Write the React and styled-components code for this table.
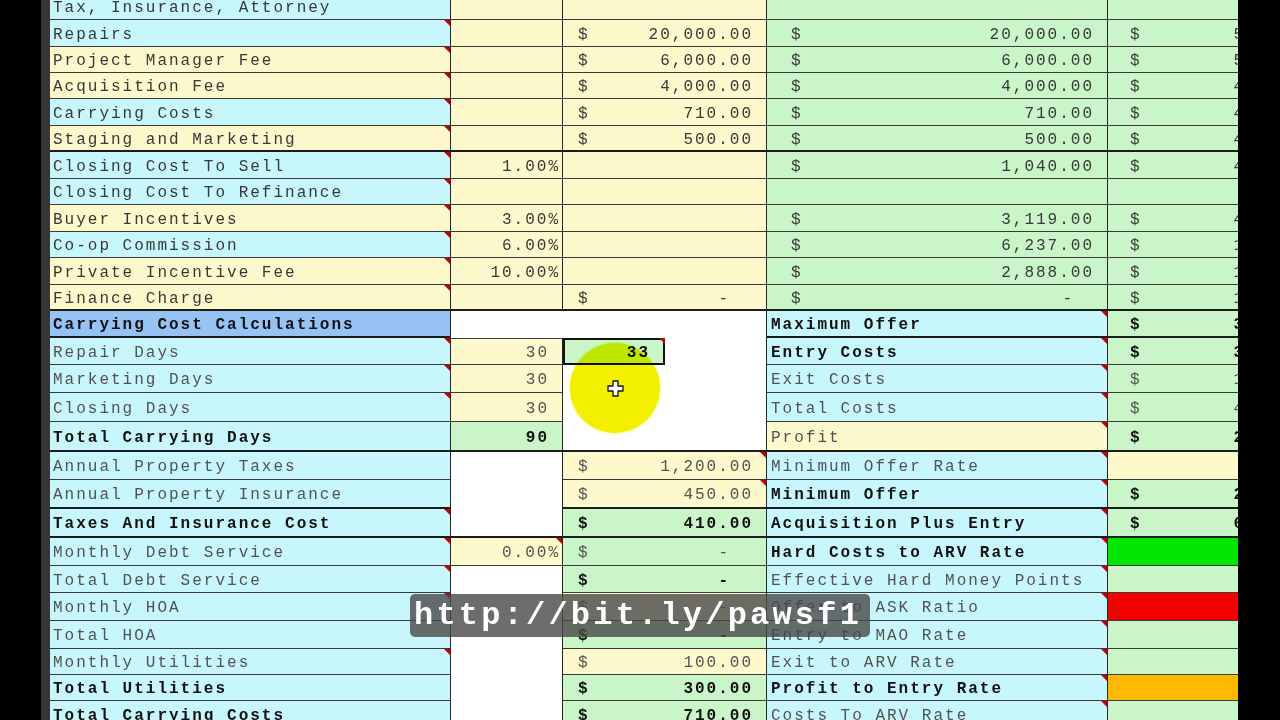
import React from 'react';
import styled, { createGlobalStyle } from 'styled-components';

const GlobalStyle = createGlobalStyle`
  html, body { margin: 0; padding: 0; background: #000; }
  body { width: 1280px; height: 720px; overflow: hidden; font-family: "Liberation Mono", "Courier New", monospace; }
`;

const COL = {
  cyan: '#c7f7fc',
  yel: '#fdf9cd',
  grn: '#c9f5c9',
  blue: '#97c2f4',
  white: '#ffffff',
  lime: '#00e600',
  red: '#f40000',
  orange: '#fdb800',
};

const Screen = styled.div`
  position: relative;
  display: flex;
  width: 1280px;
  height: 720px;
  overflow: hidden;
  background: #000;
`;

const Gutter = styled.div`
  width: 41px;
  flex: none;
  background: #000;
`;

const RowHeaders = styled.div`
  width: 9px;
  flex: none;
  background: #363636;
`;

const Viewport = styled.div`
  width: 1188px;
  flex: none;
  overflow: hidden;
`;

const RightEdge = styled.div`
  flex: 1;
  background: #000;
`;

const Sheet = styled.div`
  margin-top: -6px;
  width: 1300px;
`;

const SheetRow = styled.div`
  display: grid;
  grid-template-columns: 401px 112px 102px 102px 341px 242px;
  height: ${(p) => p.$h}px;
`;

const lineFor = (l) =>
  l === 'none' ? '0' : l === 'heavy' ? '2px solid #1c1c1c' : '1px solid #3a3a3a';

const Cell = styled.div`
  position: relative;
  grid-column: span ${(p) => p.$span || 1};
  box-sizing: border-box;
  min-width: 0;
  display: flex;
  align-items: center;
  justify-content: ${(p) => p.$justify || 'flex-start'};
  padding: 3px ${(p) => p.$pr ?? 0}px 0 ${(p) => p.$pl ?? 0}px;
  background: ${(p) => p.$bg};
  border-right: ${(p) => (p.$noRight ? '0' : '1px solid #262626')};
  border-bottom: ${(p) => lineFor(p.$line)};
  box-shadow: ${(p) =>
    p.$selected ? 'inset 0 0 0 2px #111' : p.$topLine ? 'inset 0 1px 0 #3a3a3a' : 'none'};
  color: ${(p) => (p.$bold ? '#111' : p.$muted ? '#525252' : '#383838')};
  font-weight: ${(p) => (p.$bold ? 700 : 400)};
  font-size: 16px;
  letter-spacing: 2px;
  white-space: nowrap;
  overflow: hidden;

  &::after {
    content: '';
    display: ${(p) => (p.$note ? 'block' : 'none')};
    position: absolute;
    top: 0;
    right: 0;
    width: 0;
    height: 0;
    border-top: 6px solid #c40000;
    border-left: 6px solid transparent;
  }
`;

const Sign = styled.span`
  flex: none;
`;

const Amount = styled.span`
  flex: none;
`;

const Highlight = styled.div`
  position: absolute;
  left: 570px;
  top: 343px;
  width: 90px;
  height: 90px;
  border-radius: 50%;
  background: #f2f000;
  mix-blend-mode: multiply;
  box-shadow: 0 0 3px rgba(242, 240, 0, 0.7);
`;

const CursorSpot = styled.div`
  position: absolute;
  left: 607px;
  top: 380px;
  width: 17px;
  height: 17px;
  display: flex;
`;

const UrlBadge = styled.div`
  position: absolute;
  left: 410px;
  top: 594px;
  width: 460px;
  height: 43px;
  box-sizing: border-box;
  padding-left: 4px;
  border-radius: 5px;
  background: rgba(72, 72, 72, 0.8);
  color: #fff;
  font-family: "Liberation Mono", "Courier New", monospace;
  font-weight: 700;
  font-size: 32px;
  letter-spacing: 3.2px;
  line-height: 43px;
  white-space: nowrap;
`;

const PAD = {
  cd: { span: 2, pl: 15, pr: 13 },
  e: { pl: 24, pr: 13 },
  f: { pl: 22, pr: 11 },
};

const L = (text, bg, o = {}) => ({ kind: 'label', text, bg, pl: 3, ...o });
const EL = (text, bg, o = {}) => ({ kind: 'label', text, bg, pl: 4, note: true, ...o });
const M = (amount, bg, col, o = {}) => ({ kind: 'money', amount, bg, ...PAD[col], ...(amount === '-' ? { pr: col === 'e' ? 33 : 36 } : {}), ...o });
const N = (text, bg, o = {}) => ({ kind: 'num', text, bg, justify: 'flex-end', ...o });
const X = (bg, o = {}) => ({ kind: 'empty', bg, ...o });

const up = (label, aBg, note, b, cd, e, f, h, heavy) => ({
  h,
  heavy,
  cells: [L(label, aBg, { note }), b, cd, e, f],
});

const rows = [
  up('Tax, Insurance, Attorney', COL.cyan, false, X(COL.yel), X(COL.yel, { span: 2 }), X(COL.grn), X(COL.grn), 26),
  up('Repairs', COL.cyan, true, X(COL.yel), M('20,000.00', COL.yel, 'cd'), M('20,000.00', COL.grn, 'e'), M('57,500.00', COL.grn, 'f'), 27),
  up('Project Manager Fee', COL.yel, true, X(COL.yel), M('6,000.00', COL.yel, 'cd'), M('6,000.00', COL.grn, 'e'), M('52,000.00', COL.grn, 'f'), 26),
  up('Acquisition Fee', COL.yel, true, X(COL.yel), M('4,000.00', COL.yel, 'cd'), M('4,000.00', COL.grn, 'e'), M('48,000.00', COL.grn, 'f'), 26),
  up('Carrying Costs', COL.cyan, true, X(COL.yel), M('710.00', COL.yel, 'cd'), M('710.00', COL.grn, 'e'), M('47,210.00', COL.grn, 'f'), 27),
  up('Staging and Marketing', COL.yel, true, X(COL.yel), M('500.00', COL.yel, 'cd'), M('500.00', COL.grn, 'e'), M('47,000.00', COL.grn, 'f'), 26, true),
  up('Closing Cost To Sell', COL.cyan, true, N('1.00%', COL.yel, { pr: 2 }), X(COL.yel, { span: 2 }), M('1,040.00', COL.grn, 'e'), M('41,040.00', COL.grn, 'f'), 27),
  up('Closing Cost To Refinance', COL.cyan, true, X(COL.yel), X(COL.yel, { span: 2 }), X(COL.grn), X(COL.grn), 26),
  up('Buyer Incentives', COL.yel, true, N('3.00%', COL.yel, { pr: 2 }), X(COL.yel, { span: 2 }), M('3,119.00', COL.grn, 'e'), M('43,119.00', COL.grn, 'f'), 27),
  up('Co-op Commission', COL.cyan, true, N('6.00%', COL.yel, { pr: 2 }), X(COL.yel, { span: 2 }), M('6,237.00', COL.grn, 'e'), M('16,237.00', COL.grn, 'f'), 26),
  up('Private Incentive Fee', COL.yel, true, N('10.00%', COL.yel, { pr: 2 }), X(COL.yel, { span: 2 }), M('2,888.00', COL.grn, 'e'), M('12,888.00', COL.grn, 'f'), 27),
  up('Finance Charge', COL.yel, true, X(COL.yel), M('-', COL.yel, 'cd'), M('-', COL.grn, 'e'), M('10,000.00', COL.grn, 'f'), 26, true),
  {
    h: 27,
    heavy: true,
    cells: [
      L('Carrying Cost Calculations', COL.blue, { bold: true }),
      X(COL.white, { span: 3, line: 'none' }),
      EL('Maximum Offer', COL.cyan, { bold: true }),
      M('38,500.00', COL.grn, 'f', { bold: true }),
    ],
  },
  {
    h: 27,
    cells: [
      L('Repair Days', COL.cyan, { muted: true, note: true }),
      N('30', COL.yel, { pr: 13, topLine: true, muted: true }),
      N('33', COL.grn, { pr: 15, bold: true, selected: true, note: true, noRight: true, line: 'none' }),
      X(COL.white, { line: 'none' }),
      EL('Entry Costs', COL.cyan, { bold: true }),
      M('31,210.00', COL.grn, 'f', { bold: true }),
    ],
  },
  {
    h: 28,
    cells: [
      L('Marketing Days', COL.cyan, { muted: true, note: true }),
      N('30', COL.yel, { pr: 13, muted: true }),
      X(COL.white, { noRight: true, line: 'none' }),
      X(COL.white, { line: 'none' }),
      EL('Exit Costs', COL.cyan, { muted: true }),
      M('12,284.00', COL.grn, 'f', { muted: true }),
    ],
  },
  {
    h: 29,
    cells: [
      L('Closing Days', COL.cyan, { muted: true, note: true }),
      N('30', COL.yel, { pr: 13, muted: true }),
      X(COL.white, { noRight: true, line: 'none' }),
      X(COL.white, { line: 'none' }),
      EL('Total Costs', COL.cyan, { muted: true }),
      M('43,494.00', COL.grn, 'f', { muted: true }),
    ],
  },
  {
    h: 30,
    heavy: true,
    cells: [
      L('Total Carrying Days', COL.cyan, { bold: true }),
      N('90', COL.grn, { pr: 13, bold: true }),
      X(COL.white, { noRight: true }),
      X(COL.white),
      EL('Profit', COL.yel, { muted: true }),
      M('21,506.00', COL.grn, 'f', { bold: true }),
    ],
  },
  {
    h: 28,
    cells: [
      L('Annual Property Taxes', COL.cyan, { muted: true }),
      X(COL.white, { line: 'none' }),
      M('1,200.00', COL.yel, 'cd', { note: true, muted: true }),
      EL('Minimum Offer Rate', COL.cyan, { muted: true }),
      X(COL.yel),
    ],
  },
  {
    h: 29,
    heavy: true,
    cells: [
      L('Annual Property Insurance', COL.cyan, { muted: true }),
      X(COL.white, { line: 'none' }),
      M('450.00', COL.yel, 'cd', { note: true, muted: true }),
      EL('Minimum Offer', COL.cyan, { bold: true }),
      M('24,750.00', COL.grn, 'f', { bold: true }),
    ],
  },
  {
    h: 29,
    heavy: true,
    cells: [
      L('Taxes And Insurance Cost', COL.cyan, { bold: true, note: true }),
      X(COL.white),
      M('410.00', COL.grn, 'cd', { bold: true }),
      EL('Acquisition Plus Entry', COL.cyan, { bold: true }),
      M('69,710.00', COL.grn, 'f', { bold: true }),
    ],
  },
  {
    h: 28,
    cells: [
      L('Monthly Debt Service', COL.cyan, { muted: true, note: true }),
      N('0.00%', COL.yel, { pr: 2, note: true, muted: true }),
      M('-', COL.grn, 'cd', { muted: true }),
      EL('Hard Costs to ARV Rate', COL.cyan, { bold: true }),
      X(COL.lime),
    ],
  },
  {
    h: 27,
    cells: [
      L('Total Debt Service', COL.cyan, { muted: true, note: true }),
      X(COL.white, { line: 'none' }),
      M('-', COL.grn, 'cd', { bold: true }),
      EL('Effective Hard Money Points', COL.cyan, { muted: true }),
      X(COL.grn),
    ],
  },
  {
    h: 28,
    cells: [
      L('Monthly HOA', COL.cyan, { muted: true, note: true }),
      X(COL.white, { line: 'none' }),
      M('-', COL.yel, 'cd', { muted: true }),
      EL('Offer to ASK Ratio', COL.cyan, { muted: true }),
      X(COL.red),
    ],
  },
  {
    h: 28,
    cells: [
      L('Total HOA', COL.cyan, { muted: true }),
      X(COL.white, { line: 'none' }),
      M('-', COL.grn, 'cd', { bold: true }),
      EL('Entry to MAO Rate', COL.cyan, { muted: true }),
      X(COL.grn),
    ],
  },
  {
    h: 26,
    cells: [
      L('Monthly Utilities', COL.cyan, { muted: true, note: true }),
      X(COL.white, { line: 'none' }),
      M('100.00', COL.yel, 'cd', { muted: true }),
      EL('Exit to ARV Rate', COL.cyan, { muted: true }),
      X(COL.grn),
    ],
  },
  {
    h: 26,
    cells: [
      L('Total Utilities', COL.cyan, { bold: true }),
      X(COL.white, { line: 'none' }),
      M('300.00', COL.grn, 'cd', { bold: true }),
      EL('Profit to Entry Rate', COL.cyan, { bold: true }),
      X(COL.orange),
    ],
  },
  {
    h: 28,
    cells: [
      L('Total Carrying Costs', COL.cyan, { bold: true }),
      X(COL.white, { line: 'none' }),
      M('710.00', COL.grn, 'cd', { bold: true }),
      EL('Costs To ARV Rate', COL.cyan, { muted: true }),
      X(COL.grn),
    ],
  },
];

function SheetCell({ c, heavy }) {
  const line = c.line ?? (heavy ? 'heavy' : 'thin');
  const common = {
    $bg: c.bg,
    $span: c.span,
    $pl: c.pl,
    $pr: c.pr,
    $bold: c.bold,
    $muted: c.muted,
    $note: c.note,
    $line: line,
    $noRight: c.noRight,
    $selected: c.selected,
    $topLine: c.topLine,
    $justify: c.kind === 'money' ? 'space-between' : c.justify,
  };
  if (c.kind === 'label' || c.kind === 'num') {
    return <Cell {...common}>{c.text}</Cell>;
  }
  if (c.kind === 'money') {
    return (
      <Cell {...common}>
        <Sign>$</Sign>
        <Amount>{c.amount}</Amount>
      </Cell>
    );
  }
  return <Cell {...common} />;
}

function CursorIcon() {
  return (
    <svg width="17" height="17" viewBox="0 0 17 17">
      <path
        d="M6 1h5v5h5v5h-5v5H6v-5H1V6h5z"
        fill="#fff"
        stroke="#111"
        strokeWidth="1.3"
        strokeLinejoin="round"
      />
    </svg>
  );
}

export default function App() {
  return (
    <>
      <GlobalStyle />
      <Screen>
        <Gutter />
        <RowHeaders />
        <Viewport>
          <Sheet>
            {rows.map((r, i) => (
              <SheetRow key={i} $h={r.h}>
                {r.cells.map((c, j) => (
                  <SheetCell key={j} c={c} heavy={r.heavy} />
                ))}
              </SheetRow>
            ))}
          </Sheet>
        </Viewport>
        <RightEdge />
        <Highlight />
        <CursorSpot>
          <CursorIcon />
        </CursorSpot>
        <UrlBadge>http://bit.ly/pawsf1</UrlBadge>
      </Screen>
    </>
  );
}
